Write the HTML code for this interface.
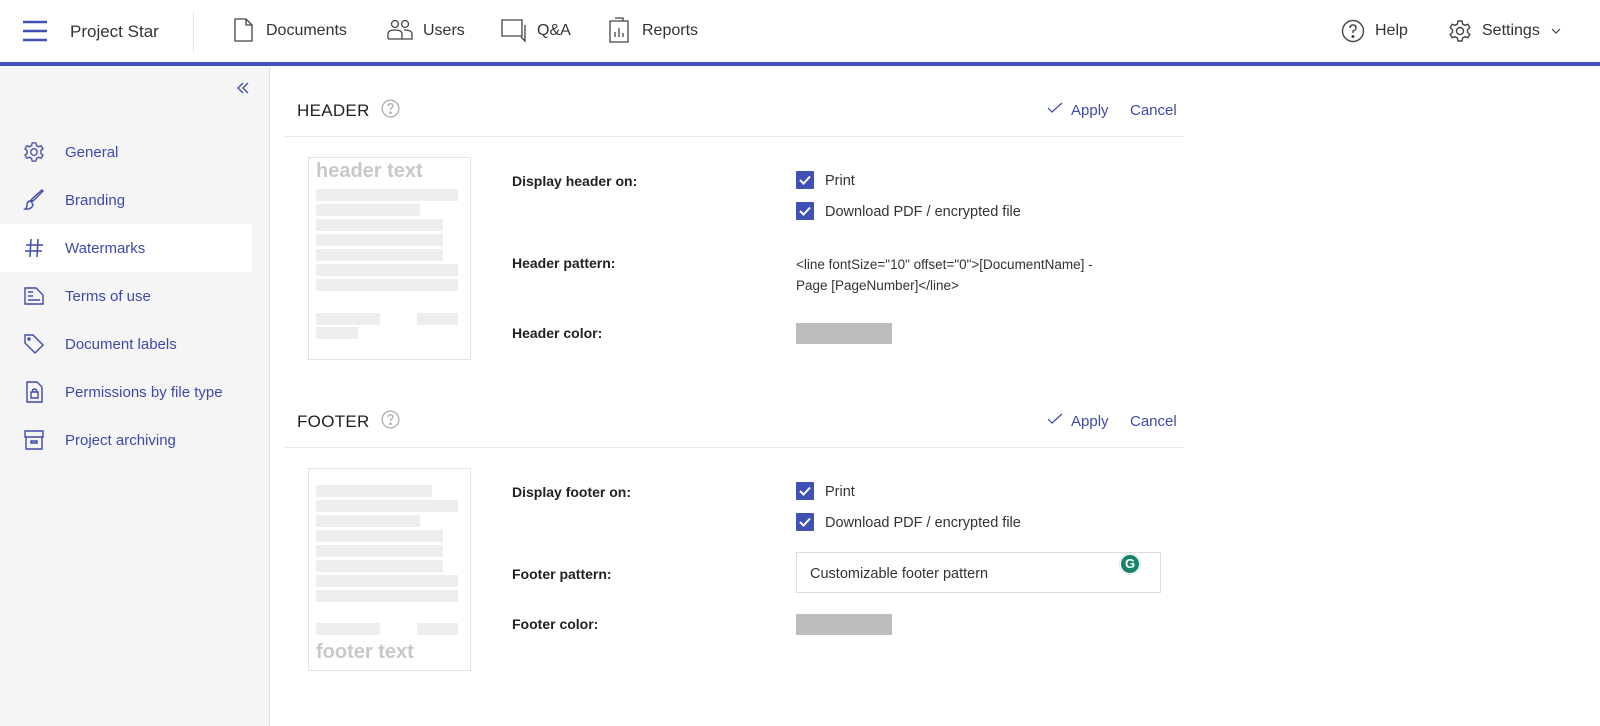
<!DOCTYPE html>
<html><head><meta charset="utf-8"><style>
*{box-sizing:border-box;margin:0;padding:0}
body{width:1600px;height:726px;overflow:hidden;font-family:"Liberation Sans",sans-serif;background:#fff;color:#333;position:relative}
.abs{position:absolute}
.top{position:absolute;left:0;top:0;width:1600px;height:62px;background:#fff}
.bar{position:absolute;left:0;top:62px;width:1600px;height:4px;background:#3f51b5}
.nav{position:absolute;top:20px;font-size:16px;color:#333}
.side{position:absolute;left:0;top:66px;width:270px;height:660px;background:#f5f5f5;border-right:1px solid #e3e3e3}
.si{position:absolute;left:0;width:252px;height:48px;font-size:15px;color:#3f4aa8}
.si span{position:absolute;left:65px;top:14px}
.si svg{position:absolute;left:23px;top:13px}
.sect{position:absolute;left:297px;font-size:17px;color:#222;letter-spacing:.3px}
.hr{position:absolute;left:285px;width:899px;height:1px;background:#e8e8e8}
.act{position:absolute;font-size:15px;color:#3f4aa8}
.lbl{position:absolute;left:512px;font-size:14px;font-weight:bold;color:#222}
.cb{position:absolute;left:796px;width:18px;height:18px;background:#3f51b5;border-radius:1px}
.cbt{position:absolute;left:825px;font-size:14.5px;color:#333}
.nav,.si span,.sect,.act,.lbl,.cbt{margin-top:2px}
.sw{position:absolute;left:796px;width:96px;height:21px;background:#bdbdbd}
.prev{position:absolute;left:308px;width:163px;height:203px;border:1px solid #e3e3e3;background:#fff}
.l{position:absolute;height:12px;background:#ededed}
.pt{position:absolute;left:316px;font-size:20px;font-weight:bold;color:#c8c8c8}
</style></head><body>
<div class="top">
<svg class="abs" style="left:22px;top:20px" width="26" height="22" viewBox="0 0 26 22"><path d="M1 2H25M1 11H25M1 20H25" stroke="#3f51b5" stroke-width="2.4"/></svg>
<div class="nav" style="left:70px;font-size:17px">Project Star</div>
<div class="abs" style="left:193px;top:12px;width:1px;height:40px;background:#e3e3e3"></div>
<svg class="abs" style="left:234px;top:18px" width="20" height="24" viewBox="0 0 20 24" fill="none" stroke="#444" stroke-width="1.3"><path d="M1 1H12L18 7V23H1Z M12 1V7H18"/></svg>
<div class="nav" style="left:266px">Documents</div>
<svg class="abs" style="left:387px;top:19px" width="26" height="22" viewBox="0 0 26 22" fill="none" stroke="#444" stroke-width="1.3"><circle cx="8" cy="5" r="3.5"/><circle cx="18" cy="5" r="3.5"/><path d="M1 20V15Q1 11 8 11Q15 11 15 15V20H1M17 11Q25 11 25 15V20H15"/></svg>
<div class="nav" style="left:423px">Users</div>
<svg class="abs" style="left:501px;top:19px" width="26" height="24" viewBox="0 0 26 24" fill="none" stroke="#444" stroke-width="1.3"><path d="M1 1H21V17H1Z M24 6V22L20 18"/></svg>
<div class="nav" style="left:537px">Q&amp;A</div>
<svg class="abs" style="left:609px;top:17px" width="20" height="26" viewBox="0 0 20 26" fill="none" stroke="#444" stroke-width="1.3"><path d="M1 4H19V25H1Z M6 1H14V4M6 20V15M10 20V11M14 20V16"/></svg>
<div class="nav" style="left:642px">Reports</div>
<svg class="abs" style="left:1341px;top:19px" width="24" height="24" viewBox="0 0 24 24" fill="none" stroke="#444" stroke-width="1.4"><circle cx="12" cy="12" r="10.5"/><path d="M9 9Q9 6 12 6Q15 6 15 9Q15 11 12 12V14"/><circle cx="12" cy="17.5" r=".8" fill="#444"/></svg>
<div class="nav" style="left:1375px">Help</div>
<svg class="abs" style="left:1448px;top:19px" width="24" height="24" viewBox="0 0 24 24" fill="none" stroke="#444" stroke-width="1.4"><circle cx="12" cy="12" r="3.5"/><path d="M10 2H14L14.6 5 17 6.3 19.8 5.2 21.8 8.6 19.5 10.6V13.4L21.8 15.4 19.8 18.8 17 17.7 14.6 19 14 22H10L9.4 19 7 17.7 4.2 18.8 2.2 15.4 4.5 13.4V10.6L2.2 8.6 4.2 5.2 7 6.3 9.4 5Z"/></svg>
<div class="nav" style="left:1482px">Settings</div>
<svg class="abs" style="left:1551px;top:28px" width="10" height="7" viewBox="0 0 10 7" fill="none" stroke="#444" stroke-width="1.2"><path d="M1 1L5 5L9 1"/></svg>
</div>
<div class="bar"></div>
<div class="side">
<svg class="abs" style="left:236px;top:16px" width="14" height="12" viewBox="0 0 14 12" fill="none" stroke="#3f4aa8" stroke-width="1.3"><path d="M7 1L2 6L7 11M12 1L7 6L12 11"/></svg>
<div class="si" style="top:62px"><svg width="22" height="22" viewBox="0 0 24 24" fill="none" stroke="#3f4aa8" stroke-width="1.4"><circle cx="12" cy="12" r="3.5"/><path d="M10 2H14L14.6 5 17 6.3 19.8 5.2 21.8 8.6 19.5 10.6V13.4L21.8 15.4 19.8 18.8 17 17.7 14.6 19 14 22H10L9.4 19 7 17.7 4.2 18.8 2.2 15.4 4.5 13.4V10.6L2.2 8.6 4.2 5.2 7 6.3 9.4 5Z"/></svg><span>General</span></div>
<div class="si" style="top:110px"><svg width="22" height="22" viewBox="0 0 22 22" fill="none" stroke="#3f4aa8" stroke-width="1.4"><path d="M20 2L10 12L8 11L11 8L19 1Z M8 12Q4 12 4 16Q4 19 2 20Q8 21 10 16Z"/></svg><span>Branding</span></div>
<div class="si" style="top:158px;background:#fff"><svg width="22" height="22" viewBox="0 0 22 22" fill="none" stroke="#3f4aa8" stroke-width="1.5"><path d="M8 2L7 20M15 2L14 20M3 8H20M2 14H19"/></svg><span>Watermarks</span></div>
<div class="si" style="top:206px"><svg width="22" height="22" viewBox="0 0 22 22" fill="none" stroke="#3f4aa8" stroke-width="1.4"><path d="M2 3H13L20 10V19H2Z M5 7H10M5 11H10M5 15H17"/></svg><span>Terms of use</span></div>
<div class="si" style="top:254px"><svg width="22" height="22" viewBox="0 0 22 22" fill="none" stroke="#3f4aa8" stroke-width="1.4"><path d="M2 2H10L20 12L12 20L2 10Z"/><circle cx="6" cy="6" r="1"/></svg><span>Document labels</span></div>
<div class="si" style="top:302px"><svg width="22" height="22" viewBox="0 0 22 22" fill="none" stroke="#3f4aa8" stroke-width="1.4"><path d="M4 1H14L19 6V21H4Z M8 11H15V17H8Z M9.5 11V9Q11.5 7 13.5 9V11"/></svg><span>Permissions by file type</span></div>
<div class="si" style="top:350px"><svg width="22" height="22" viewBox="0 0 22 22" fill="none" stroke="#3f4aa8" stroke-width="1.4"><path d="M2 2H20V8H2Z M3 8V20H19V8 M8 12H14V14H8Z"/></svg><span>Project archiving</span></div>
</div>

<div class="sect" style="top:99px">HEADER</div>
<svg class="abs" style="left:381px;top:99px" width="19" height="19" viewBox="0 0 20 20" fill="none" stroke="#aaa" stroke-width="1.3"><circle cx="10" cy="10" r="8.8"/><path d="M7.5 7.5Q7.5 5 10 5Q12.5 5 12.5 7.5Q12.5 9 10 10V11.5"/><circle cx="10" cy="14.5" r=".7" fill="#aaa"/></svg>
<svg class="abs" style="left:1047px;top:102px" width="16" height="12" viewBox="0 0 16 12" fill="none" stroke="#3f4aa8" stroke-width="1.2"><path d="M1 6L5 10L15 1"/></svg>
<div class="act" style="left:1071px;top:100px">Apply</div>
<div class="act" style="left:1130px;top:100px">Cancel</div>
<div class="hr" style="top:136px"></div>
<div class="prev" style="top:157px"></div>
<div class="pt" style="top:160px">header text</div>
<div class="l" style="left:316px;top:189px;width:142px"></div>
<div class="l" style="left:316px;top:204px;width:104px"></div>
<div class="l" style="left:316px;top:219px;width:127px"></div>
<div class="l" style="left:316px;top:234px;width:127px"></div>
<div class="l" style="left:316px;top:249px;width:127px"></div>
<div class="l" style="left:316px;top:264px;width:142px"></div>
<div class="l" style="left:316px;top:279px;width:142px"></div>
<div class="l" style="left:316px;top:313px;width:64px"></div>
<div class="l" style="left:417px;top:313px;width:41px"></div>
<div class="l" style="left:316px;top:327px;width:42px"></div>
<div class="lbl" style="top:171px">Display header on:</div>
<div class="lbl" style="top:253px">Header pattern:</div>
<div class="lbl" style="top:323px">Header color:</div>
<div class="cb" style="top:171px"><svg width="18" height="18" viewBox="0 0 18 18" fill="none" stroke="#fff" stroke-width="2"><path d="M4 9L7.5 12.5L14 5.5"/></svg></div>
<div class="cbt" style="top:171px">Print</div>
<div class="cb" style="top:202px"><svg width="18" height="18" viewBox="0 0 18 18" fill="none" stroke="#fff" stroke-width="2"><path d="M4 9L7.5 12.5L14 5.5"/></svg></div>
<div class="cbt" style="top:202px">Download PDF / encrypted file</div>
<div class="abs" style="left:796px;top:254px;font-size:13.5px;line-height:21px;color:#333;width:370px">&lt;line fontSize="10" offset="0"&gt;[DocumentName] -<br>Page [PageNumber]&lt;/line&gt;</div>
<div class="sw" style="top:323px"></div>

<div class="sect" style="top:410px">FOOTER</div>
<svg class="abs" style="left:381px;top:410px" width="19" height="19" viewBox="0 0 20 20" fill="none" stroke="#aaa" stroke-width="1.3"><circle cx="10" cy="10" r="8.8"/><path d="M7.5 7.5Q7.5 5 10 5Q12.5 5 12.5 7.5Q12.5 9 10 10V11.5"/><circle cx="10" cy="14.5" r=".7" fill="#aaa"/></svg>
<svg class="abs" style="left:1047px;top:413px" width="16" height="12" viewBox="0 0 16 12" fill="none" stroke="#3f4aa8" stroke-width="1.2"><path d="M1 6L5 10L15 1"/></svg>
<div class="act" style="left:1071px;top:411px">Apply</div>
<div class="act" style="left:1130px;top:411px">Cancel</div>
<div class="hr" style="top:447px"></div>
<div class="prev" style="top:468px"></div>
<div class="l" style="left:316px;top:485px;width:116px"></div>
<div class="l" style="left:316px;top:500px;width:142px"></div>
<div class="l" style="left:316px;top:515px;width:104px"></div>
<div class="l" style="left:316px;top:530px;width:127px"></div>
<div class="l" style="left:316px;top:545px;width:127px"></div>
<div class="l" style="left:316px;top:560px;width:127px"></div>
<div class="l" style="left:316px;top:575px;width:142px"></div>
<div class="l" style="left:316px;top:590px;width:142px"></div>
<div class="l" style="left:316px;top:623px;width:64px"></div>
<div class="l" style="left:417px;top:623px;width:41px"></div>
<div class="pt" style="top:641px">footer text</div>
<div class="lbl" style="top:482px">Display footer on:</div>
<div class="lbl" style="top:564px">Footer pattern:</div>
<div class="lbl" style="top:614px">Footer color:</div>
<div class="cb" style="top:482px"><svg width="18" height="18" viewBox="0 0 18 18" fill="none" stroke="#fff" stroke-width="2"><path d="M4 9L7.5 12.5L14 5.5"/></svg></div>
<div class="cbt" style="top:482px">Print</div>
<div class="cb" style="top:513px"><svg width="18" height="18" viewBox="0 0 18 18" fill="none" stroke="#fff" stroke-width="2"><path d="M4 9L7.5 12.5L14 5.5"/></svg></div>
<div class="cbt" style="top:513px">Download PDF / encrypted file</div>
<div class="abs" style="left:796px;top:552px;width:365px;height:41px;border:1px solid #ddd"></div>
<div class="abs" style="left:810px;top:566px;font-size:14.5px;color:#333">Customizable footer pattern</div>
<div class="abs" style="left:1119px;top:553px;width:22px;height:22px;border-radius:50%;background:#fff;border:1px solid #e5e5e5"></div>
<div class="abs" style="left:1121px;top:555px;width:18px;height:18px;border-radius:50%;background:#15846b;color:#fff;font-size:13px;font-weight:bold;text-align:center;line-height:18px">G</div>
<div class="sw" style="top:614px"></div>
</body></html>
